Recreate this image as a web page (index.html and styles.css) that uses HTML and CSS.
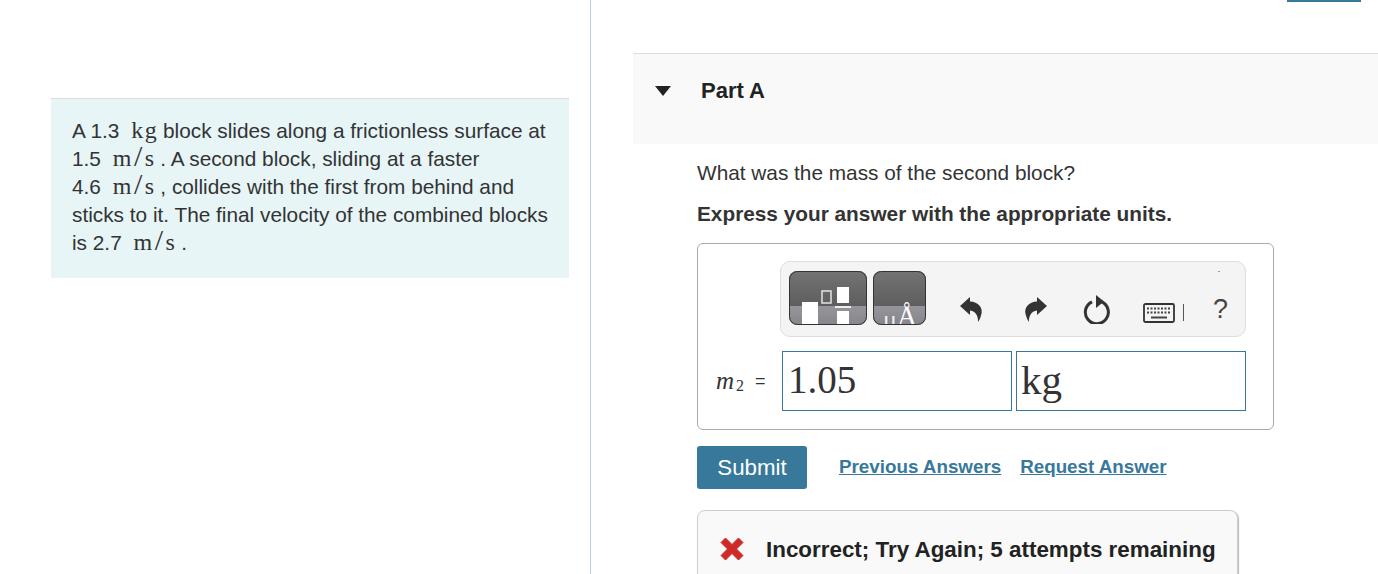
FILE: index.html
```html
<!DOCTYPE html>
<html lang="en">
<head>
  <meta charset="UTF-8">
  <title>Part A</title>
  <link rel="stylesheet" href="styles.css">
</head>
<body>
  <div class="page">
    <div class="left-col">
      <div class="intro">
        A 1.3 <span class="math">kg</span> block slides along a frictionless surface at
        1.5 <span class="math">m<i class="slash">/</i>s</span> . A second block, sliding at a faster<br>
        4.6 <span class="math">m<i class="slash">/</i>s</span> , collides with the first from behind and
        sticks to it. The final velocity of the combined blocks
        is 2.7 <span class="math">m<i class="slash">/</i>s</span> .
      </div>
    </div>

    <div class="right-col">
      <div class="top-tab"></div>
      <div class="part-header">
        <span class="caret"></span>
        <h2>Part A</h2>
      </div>

      <div class="part-body">
        <p class="question">What was the mass of the second block?</p>
        <p class="hint">Express your answer with the appropriate units.</p>

        <div class="answer-box">
          <div class="toolbar">
            <span class="speck"></span>
            <svg class="tpl-btn" width="78" height="54" viewBox="0 0 78 54">
              <defs>
                <clipPath id="clipA"><rect width="78" height="54" rx="8"/></clipPath>
                <linearGradient id="btnTop" x1="0" y1="0" x2="0" y2="1">
                  <stop offset="0" stop-color="#737373"/>
                  <stop offset="1" stop-color="#5e5e5e"/>
                </linearGradient>
                <linearGradient id="btnLow" x1="0" y1="0" x2="0" y2="1">
                  <stop offset="0" stop-color="#95959b"/>
                  <stop offset="1" stop-color="#85858b"/>
                </linearGradient>
              </defs>
              <g clip-path="url(#clipA)">
                <rect width="78" height="35" fill="url(#btnTop)"/>
                <rect y="35" width="78" height="19" fill="url(#btnLow)"/>
                <rect x="13" y="31" width="16" height="22" fill="#fff"/>
                <rect x="33" y="20" width="9" height="12" fill="none" stroke="#ddd" stroke-width="1.6"/>
                <rect x="48" y="16" width="12" height="16" fill="#fff"/>
                <rect x="46" y="35" width="16" height="2" fill="#eee"/>
                <rect x="48" y="40" width="12" height="13" fill="#fff"/>
              </g>
              <rect x=".5" y=".5" width="77" height="53" rx="8" fill="none" stroke="#333"/>
            </svg>
            <svg class="tpl-btn" width="53" height="54" viewBox="0 0 53 54">
              <defs>
                <clipPath id="clipB"><rect width="53" height="54" rx="8"/></clipPath>
              </defs>
              <g clip-path="url(#clipB)">
                <rect width="53" height="35" fill="url(#btnTop)"/>
                <rect y="35" width="53" height="19" fill="url(#btnLow)"/>
                <text x="17" y="57" class="unit-mu">μ</text>
                <text x="34" y="54" class="unit-a">Å</text>
              </g>
              <rect x=".5" y=".5" width="52" height="53" rx="8" fill="none" stroke="#333"/>
            </svg>

            <svg class="icon undo" width="26" height="28" viewBox="0 0 26 28">
              <path d="M2 11 12 2v4.500C20 6.500 26 13 23 20.500 22.500 23 21 25.500 20 27 20.500 22 18 16 12 15.500V20Z" fill="#333"/>
            </svg>
            <svg class="icon redo" width="26" height="28" viewBox="0 0 26 28">
              <path d="M24 11 14 2v4.500C6 6.500 0 13 3 20.500 3.500 23 5 25.500 6 27 5.500 22 8 16 14 15.500V20Z" fill="#333"/>
            </svg>
            <svg class="icon reload" width="30" height="30" viewBox="0 0 30 30">
              <path d="M18 6.500A11.500 11.500 0 1 1 9 6.800" transform="translate(1 1)" fill="none" stroke="#333" stroke-width="3"/>
              <path d="M14 1 22 7.500 14 14Z" fill="#333"/>
            </svg>
            <svg class="icon keys" width="32" height="21" viewBox="0 0 32 21">
              <rect x="1" y="1" width="30" height="18" rx="1.500" fill="#f4f4f4" stroke="#333" stroke-width="1.800"/>
              <path d="M4 5.500H28M4 9.500H28" stroke="#444" stroke-width="2" stroke-dasharray="2 1.500"/>
              <path d="M8 14.500H24" stroke="#444" stroke-width="2"/>
            </svg>
            <span class="bar"></span>
            <span class="help">?</span>
          </div>

          <div class="answer-row">
            <div class="label">
              <span class="var"><i>m</i><sub>2</sub></span>
              <span class="equals">=</span>
            </div>
            <div class="field">1.05</div>
            <div class="field unit">kg</div>
          </div>
        </div>

        <div class="actions">
          <button class="submit" type="button">Submit</button>
          <a class="link first" href="#">Previous Answers</a>
          <a class="link" href="#">Request Answer</a>
        </div>

        <div class="feedback">
          <svg width="24" height="24" viewBox="0 0 24 24">
            <path d="M5.500 1 12 7.500 18.500 1 23 5.500 16.500 12 23 18.500 18.500 23 12 16.500 5.500 23 1 18.500 7.500 12 1 5.500Z" fill="#cf2a2a" stroke="#cf2a2a" stroke-linejoin="round"/>
          </svg>
          <span>Incorrect; Try Again; 5 attempts remaining</span>
        </div>
      </div>
    </div>
  </div>
</body>
</html>
```

FILE: styles.css
```css
html, body {
  margin: 0;
  height: 574px;
  overflow: hidden;
  background: #fff;
}

body {
  font-family: 'Liberation Sans', Arial, sans-serif;
  color: #333;
}

.page {
  display: flex;
  height: 574px;
}

/* left column */
.left-col {
  box-sizing: border-box;
  width: 591px;
  flex: none;
  padding: 98px 21px 0 51px;
  border-right: 1px solid #b9cfe2;
}

.intro {
  box-sizing: border-box;
  height: 180px;
  padding: 18px 16px 0 21px;
  border-top: 1px solid #ddd;
  background: #e7f5f7;
  font-size: 20.8px;
  line-height: 28px;
}

.math {
  font-family: 'Liberation Serif', serif;
  font-size: 24px;
  line-height: 0;
  letter-spacing: 1.5px;
  margin: 0 -1px 0 6px;
}

.slash {
  font-style: normal;
  font-size: 30px;
  font-weight: 400;
  line-height: 0;
  margin: 0 1px;
}

/* right column */
.right-col {
  position: relative;
  flex: 1;
  padding: 53px 0 0 42px;
}

.top-tab {
  position: absolute;
  top: 0;
  left: 696px;
  width: 74px;
  height: 2px;
  background: #37789b;
}

.part-header {
  box-sizing: border-box;
  display: flex;
  align-items: flex-start;
  height: 91px;
  padding: 23px 0 0 22px;
  border-top: 1px solid #ddd;
  background: #f9f9f9;
}

.caret {
  width: 0;
  height: 0;
  margin-top: 9px;
  border-left: 8px solid transparent;
  border-right: 8px solid transparent;
  border-top: 10px solid #222;
}

.part-header h2 {
  margin: 0 0 0 30px;
  font-size: 22px;
  line-height: 28px;
  font-weight: 700;
  color: #222;
}

.part-body {
  padding: 15px 0 0 64px;
}

.question {
  margin: 0;
  font-size: 20.8px;
  line-height: 28px;
}

.hint {
  margin: 13px 0 0;
  font-size: 20.8px;
  line-height: 28px;
  font-weight: 700;
}

.answer-box {
  box-sizing: border-box;
  width: 577px;
  height: 187px;
  margin-top: 15px;
  padding: 17px 27px 0 18px;
  border: 1px solid #aaa;
  border-radius: 6px;
}

/* toolbar */
.toolbar {
  position: relative;
  box-sizing: border-box;
  display: flex;
  align-items: flex-start;
  width: 466px;
  height: 76px;
  margin-left: 64px;
  padding: 9px 0 0 8px;
  background: #f4f4f4;
  border: 1px solid #ddd;
  border-radius: 10px;
}

.speck {
  position: absolute;
  top: 9px;
  left: 437px;
  width: 2px;
  height: 1px;
  background: #999;
}

.tpl-btn {
  flex: none;
  margin-right: 6px;
}

.unit-mu {
  font-family: 'Liberation Serif', serif;
  font-size: 26px;
  fill: #eee;
  text-anchor: middle;
}

.unit-a {
  font-family: 'Liberation Serif', serif;
  font-size: 27px;
  fill: #fff;
  text-anchor: middle;
}

.icon {
  flex: none;
}

.undo {
  margin: 24px 0 0 26px;
}

.redo {
  margin: 24px 0 0 39px;
}

.reload {
  margin: 23px 0 0 33px;
}

.keys {
  margin: 32px 0 0 31px;
}

.bar {
  width: 1px;
  height: 17px;
  margin: 33px 0 0 8px;
  background: #555;
}

.help {
  margin: 22px 0 0 29px;
  font-size: 27px;
  line-height: 32px;
  color: #444;
}

/* answer inputs */
.answer-row {
  display: flex;
  align-items: center;
  margin-top: 14px;
}

.label {
  display: flex;
  align-items: center;
  flex: none;
  width: 66px;
}

.var {
  font-family: 'Liberation Serif', serif;
  font-size: 25px;
  line-height: 30px;
  letter-spacing: 2px;
  color: #333;
}

.var sub {
  font-size: 16px;
  line-height: 0;
  letter-spacing: 0;
  vertical-align: -2px;
}

.equals {
  margin-left: 11px;
  font-size: 18px;
}

.field {
  box-sizing: border-box;
  width: 230px;
  height: 60px;
  padding-left: 5px;
  border: 1px solid #37789b;
  font-family: 'Liberation Serif', serif;
  font-size: 39px;
  line-height: 56px;
}

.field.unit {
  margin-left: 4px;
  padding-left: 4px;
  font-size: 41px;
}

/* actions */
.actions {
  display: flex;
  align-items: center;
  margin-top: 16px;
}

.submit {
  width: 110px;
  height: 43px;
  padding: 0;
  border: none;
  border-radius: 3px;
  background: #37789b;
  color: #fff;
  font-family: inherit;
  font-size: 22.3px;
}

.link {
  margin: 0 0 2px 19px;
  font-size: 18.8px;
  font-weight: 700;
  color: #37789b;
}

.link.first {
  margin-left: 32px;
}

/* feedback */
.feedback {
  box-sizing: border-box;
  display: flex;
  align-items: flex-start;
  width: 541px;
  height: 90px;
  margin-top: 21px;
  padding: 26px 0 0 22px;
  background: #f9f9f9;
  border: 1px solid #ccc;
  border-radius: 8px;
  box-shadow: 1px 1px 1px #bbb;
  font-size: 22.4px;
  line-height: 26px;
  font-weight: 700;
  color: #222;
}

.feedback span {
  margin-left: 22px;
}
```
